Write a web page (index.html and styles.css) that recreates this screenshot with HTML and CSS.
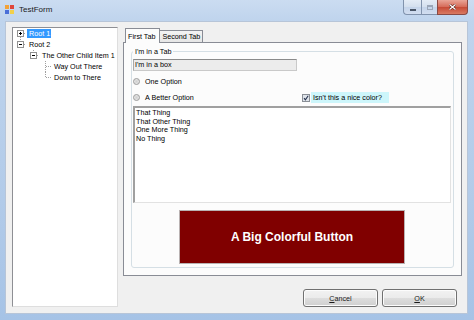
FILE: index.html
```html
<!DOCTYPE html>
<html>
<head>
<meta charset="utf-8">
<title>TestForm</title>
<link rel="stylesheet" href="styles.css">
</head>
<body>
<div class="window">
  <div class="titlebar">
    <svg class="app-icon" width="9" height="9" viewBox="0 0 9 9">
      <rect x="0" y="0" width="4" height="4" fill="#f2a33a"/>
      <rect x="5" y="0" width="4" height="4" fill="#e0463a"/>
      <rect x="0" y="5" width="4" height="4" fill="#4a6fd8"/>
      <rect x="5" y="5" width="4" height="4" fill="#f2d04a"/>
    </svg>
    <span class="title">TestForm</span>
    <div class="caption">
      <div class="cb cb-min"><span class="min-glyph"></span></div>
      <div class="cb cb-max"><span class="max-glyph"></span></div>
      <div class="cb cb-close">
        <svg width="7" height="6" viewBox="0 0 7 6"><path d="M0.5 0.5L6.5 5.5M6.5 0.5L0.5 5.5" stroke="#5a1a12" stroke-width="2.4"/><path d="M0.5 0.5L6.5 5.5M6.5 0.5L0.5 5.5" stroke="#ffffff" stroke-width="1.3"/></svg>
      </div>
    </div>
  </div>
  <div class="client">
    <div class="tree">
      <div class="node lvl0">
        <svg class="tg" width="12" height="11"><path class="dl" d="M6.5 9V11M10 5.5H12"/><rect class="bx" x="3.5" y="2.5" width="6" height="6"/><path class="sg" d="M5 5.5H8M6.5 4V7"/></svg>
        <span class="label selected">Root 1</span>
      </div>
      <div class="node lvl0">
        <svg class="tg" width="12" height="11"><path class="dl" d="M6.5 0V2M10 5.5H12"/><rect class="bx" x="3.5" y="2.5" width="6" height="6"/><path class="sg" d="M5 5.5H8"/></svg>
        <span class="label">Root 2</span>
      </div>
      <div class="node lvl1">
        <svg class="tg" width="12" height="11"><path class="dl" d="M6.5 0V2M10 5.5H12"/><rect class="bx" x="3.5" y="2.5" width="6" height="6"/><path class="sg" d="M5 5.5H8"/></svg>
        <span class="label">The Other Child Item 1</span>
      </div>
      <div class="node lvl2">
        <svg class="tg" width="12" height="11"><path class="dl" d="M6.5 0V11M7 5.5H12"/></svg>
        <span class="label">Way Out There</span>
      </div>
      <div class="node lvl2">
        <svg class="tg" width="12" height="11"><path class="dl" d="M6.5 0V6M7 5.5H12"/></svg>
        <span class="label">Down to There</span>
      </div>
    </div>
    <div class="right">
      <div class="tabs">
        <div class="tab sel">First Tab</div>
        <div class="tab other">Second Tab</div>
      </div>
      <div class="tabpage">
        <fieldset class="group">
          <legend>I'm in a Tab</legend>
          <div class="gcontent">
            <div class="textbox">I'm in a box</div>
            <div class="row row1">
              <span class="opt"><span class="radio"></span><span class="opt-text">One Option</span></span>
            </div>
            <div class="row row2">
              <span class="opt"><span class="radio"></span><span class="opt-text">A Better Option</span></span>
              <span class="check">
                <svg class="cbox" width="8" height="8" viewBox="0 0 8 8"><rect x="0.5" y="0.5" width="7" height="7" fill="#dfe4ea" stroke="#8a8f96"/><path d="M2 4.2L3.4 5.8L6.2 1.8" fill="none" stroke="#26324e" stroke-width="1.1"/></svg>
                <span class="check-label">Isn't this a nice color?</span>
              </span>
            </div>
            <div class="listbox">
              <div>That Thing</div>
              <div>That Other Thing</div>
              <div>One More Thing</div>
              <div>No Thing</div>
            </div>
            <button class="bigbtn">A Big Colorful Button</button>
          </div>
        </fieldset>
      </div>
      <div class="buttons">
        <button class="btn"><span class="u">C</span>ancel</button>
        <button class="btn"><span class="u">O</span>K</button>
      </div>
    </div>
  </div>
</div>
</body>
</html>
```
FILE: styles.css
```css
* { box-sizing: border-box; }
html, body { margin: 0; padding: 0; }
body {
  width: 474px;
  height: 320px;
  overflow: hidden;
  font-family: "Liberation Sans", Arial, sans-serif;
  font-size: 7.2px;
  color: #000;
  background: #ffffff;
}
.window {
  width: 474px;
  height: 320px;
  display: flex;
  flex-direction: column;
  padding: 0 6px 6px 5px;
  background: linear-gradient(to bottom, #cbdcf1 0px, #bfd4ed 21px, #b2cbe9 200px, #a6c3e6 320px);
}
.titlebar {
  height: 21px;
  flex: none;
  display: flex;
  align-items: center;
  padding-bottom: 2px;
}
.app-icon { flex: none; display: block; }
.title {
  margin-left: 5px;
  font-size: 8px;
  color: #1b1b1b;
}
.caption {
  margin-left: auto;
  align-self: flex-start;
  display: flex;
}
.cb {
  height: 15px;
  border: 1px solid #8193ad;
  border-top: none;
  display: flex;
  align-items: center;
  justify-content: center;
}
.cb-min {
  width: 18px;
  border-right: none;
  border-radius: 0 0 0 4px;
  background: linear-gradient(to bottom, #e4ecf6 0%, #d3dfee 50%, #c4d4ea 51%, #d2def0 100%);
  align-items: flex-end;
  padding-bottom: 3px;
}
.cb-max {
  width: 16px;
  border-right: none;
  background: linear-gradient(to bottom, #e4ecf6 0%, #d3dfee 50%, #c4d4ea 51%, #d2def0 100%);
}
.cb-close {
  width: 31px;
  border-color: #8a4a44;
  border-radius: 0 0 4px 0;
  background: linear-gradient(to bottom, #e9a597 0%, #d56a58 50%, #c64a36 51%, #d97a62 100%);
}
.cb-close svg { display: block; }
.min-glyph {
  width: 6px;
  height: 2px;
  background: #4a5668;
}
.max-glyph {
  width: 6px;
  height: 5px;
  border: 1px solid #9aa6b8;
  border-top-width: 2px;
}
.client {
  height: 293px;
  flex: none;
  border: 1px solid #b7c5d8;
  background: #f0f0f0;
  display: flex;
  align-items: flex-start;
  padding: 5px 5px 0 6px;
  gap: 5px;
}
.tree {
  width: 106px;
  height: 280px;
  flex: none;
  background: #ffffff;
  border-top: 1px solid #8e8f94;
  border-left: 1px solid #8e8f94;
  border-right: 1px solid #dedede;
  border-bottom: 1px solid #dedede;
  padding-left: 1px;
}
.node {
  height: 11px;
  display: flex;
  align-items: center;
  white-space: nowrap;
}
.lvl1 { padding-left: 13px; }
.lvl2 { padding-left: 25px; }
.tg { display: block; flex: none; }
.dl { fill: none; stroke: #a0a0a0; stroke-width: 1; stroke-dasharray: 1 1; shape-rendering: crispEdges; }
.bx { fill: #ffffff; stroke: #919191; stroke-width: 1; shape-rendering: crispEdges; }
.sg { fill: none; stroke: #000000; stroke-width: 1; shape-rendering: crispEdges; }
.label {
  margin-left: 1px;
  padding: 0 1px 0 2px;
  line-height: 9px;
  height: 9px;
  display: inline-block;
}
.label.selected {
  background: #3399ff;
  color: #ffffff;
}
.right {
  width: 339px;
  flex: none;
  margin-top: 1px;
  display: flex;
  flex-direction: column;
}
.tabs {
  height: 14px;
  display: flex;
  align-items: flex-end;
  padding-left: 2px;
}
.tab {
  border: 1px solid #898c95;
  border-bottom: none;
  display: flex;
  align-items: center;
  white-space: nowrap;
}
.tab.sel {
  height: 15px;
  margin-bottom: -1px;
  padding: 0 4px 0 2px;
  background: #fcfcfc;
  position: relative;
  z-index: 1;
}
.tab.other {
  height: 12px;
  border-left: none;
  padding: 0 2px 0 2px;
  background: linear-gradient(to bottom, #f3f3f3, #e6e6e6);
}
.tabpage {
  height: 234px;
  border: 1px solid #898c95;
  background: #fcfcfc;
  display: flex;
  flex-direction: column;
}
.group {
  margin: 4px 7px 7px 7px;
  flex: 1;
  min-width: 0;
  border: 1px solid #d5dfe5;
  border-radius: 3px;
  padding: 0 2px 0 1px;
}
.group legend {
  padding: 0 2px;
  margin: 0;
  line-height: 9px;
  font-size: 7.2px;
}
.gcontent {
  display: flex;
  flex-direction: column;
}
.textbox {
  margin-top: 3px;
  width: 164px;
  height: 12px;
  background: #ececec;
  border: 1px solid #c9c9c9;
  border-top-color: #8a8a8a;
  border-left-color: #a9a9a9;
  padding-left: 1px;
  line-height: 10px;
  white-space: nowrap;
}
.row {
  display: flex;
  align-items: center;
}
.row1 { margin-top: 6px; height: 9px; }
.row2 { margin-top: 6px; height: 11px; }
.opt {
  width: 169px;
  flex: none;
  display: flex;
  align-items: center;
}
.radio {
  width: 7px;
  height: 7px;
  flex: none;
  border-radius: 50%;
  border: 1px solid #9a9a9a;
  background: radial-gradient(circle, #cfcfcf 0%, #dcdcdc 45%, #f3f3f3 100%);
}
.opt-text { margin-left: 5px; white-space: nowrap; }
.check {
  display: flex;
  align-items: center;
  height: 11px;
}
.cbox { display: block; flex: none; }
.check-label {
  margin-left: 1px;
  height: 11px;
  line-height: 11px;
  padding: 0 7px 0 2px;
  background: #cdf6fb;
  white-space: nowrap;
}
.listbox {
  margin-top: 3px;
  height: 97px;
  background: #ffffff;
  border-top: 2px solid #a0a0a0;
  border-left: 2px solid #a0a0a0;
  border-right: 1px solid #e2e2e2;
  border-bottom: 1px solid #e2e2e2;
  padding: 1px 0 0 1px;
  line-height: 8.7px;
}
.bigbtn {
  margin-top: 7px;
  align-self: center;
  width: 226px;
  height: 54px;
  background: #800000;
  border: 1px solid #b9b2b2;
  color: #ffffff;
  font-family: "Liberation Sans", Arial, sans-serif;
  font-weight: bold;
  font-size: 12px;
  padding: 0;
}
.buttons {
  margin-top: 13px;
  display: flex;
  justify-content: flex-end;
  gap: 4px;
  padding-right: 5px;
}
.btn {
  width: 75px;
  height: 18px;
  padding: 0;
  border: 1px solid #707070;
  border-radius: 3px;
  background: linear-gradient(to bottom, #f2f2f2 0%, #ebebeb 50%, #dddddd 51%, #cfcfcf 100%);
  box-shadow: inset 0 0 0 1px #fcfcfc;
  font-family: "Liberation Sans", Arial, sans-serif;
  font-size: 7.2px;
  color: #1a1a1a;
}
.u { text-decoration: underline; }
```
